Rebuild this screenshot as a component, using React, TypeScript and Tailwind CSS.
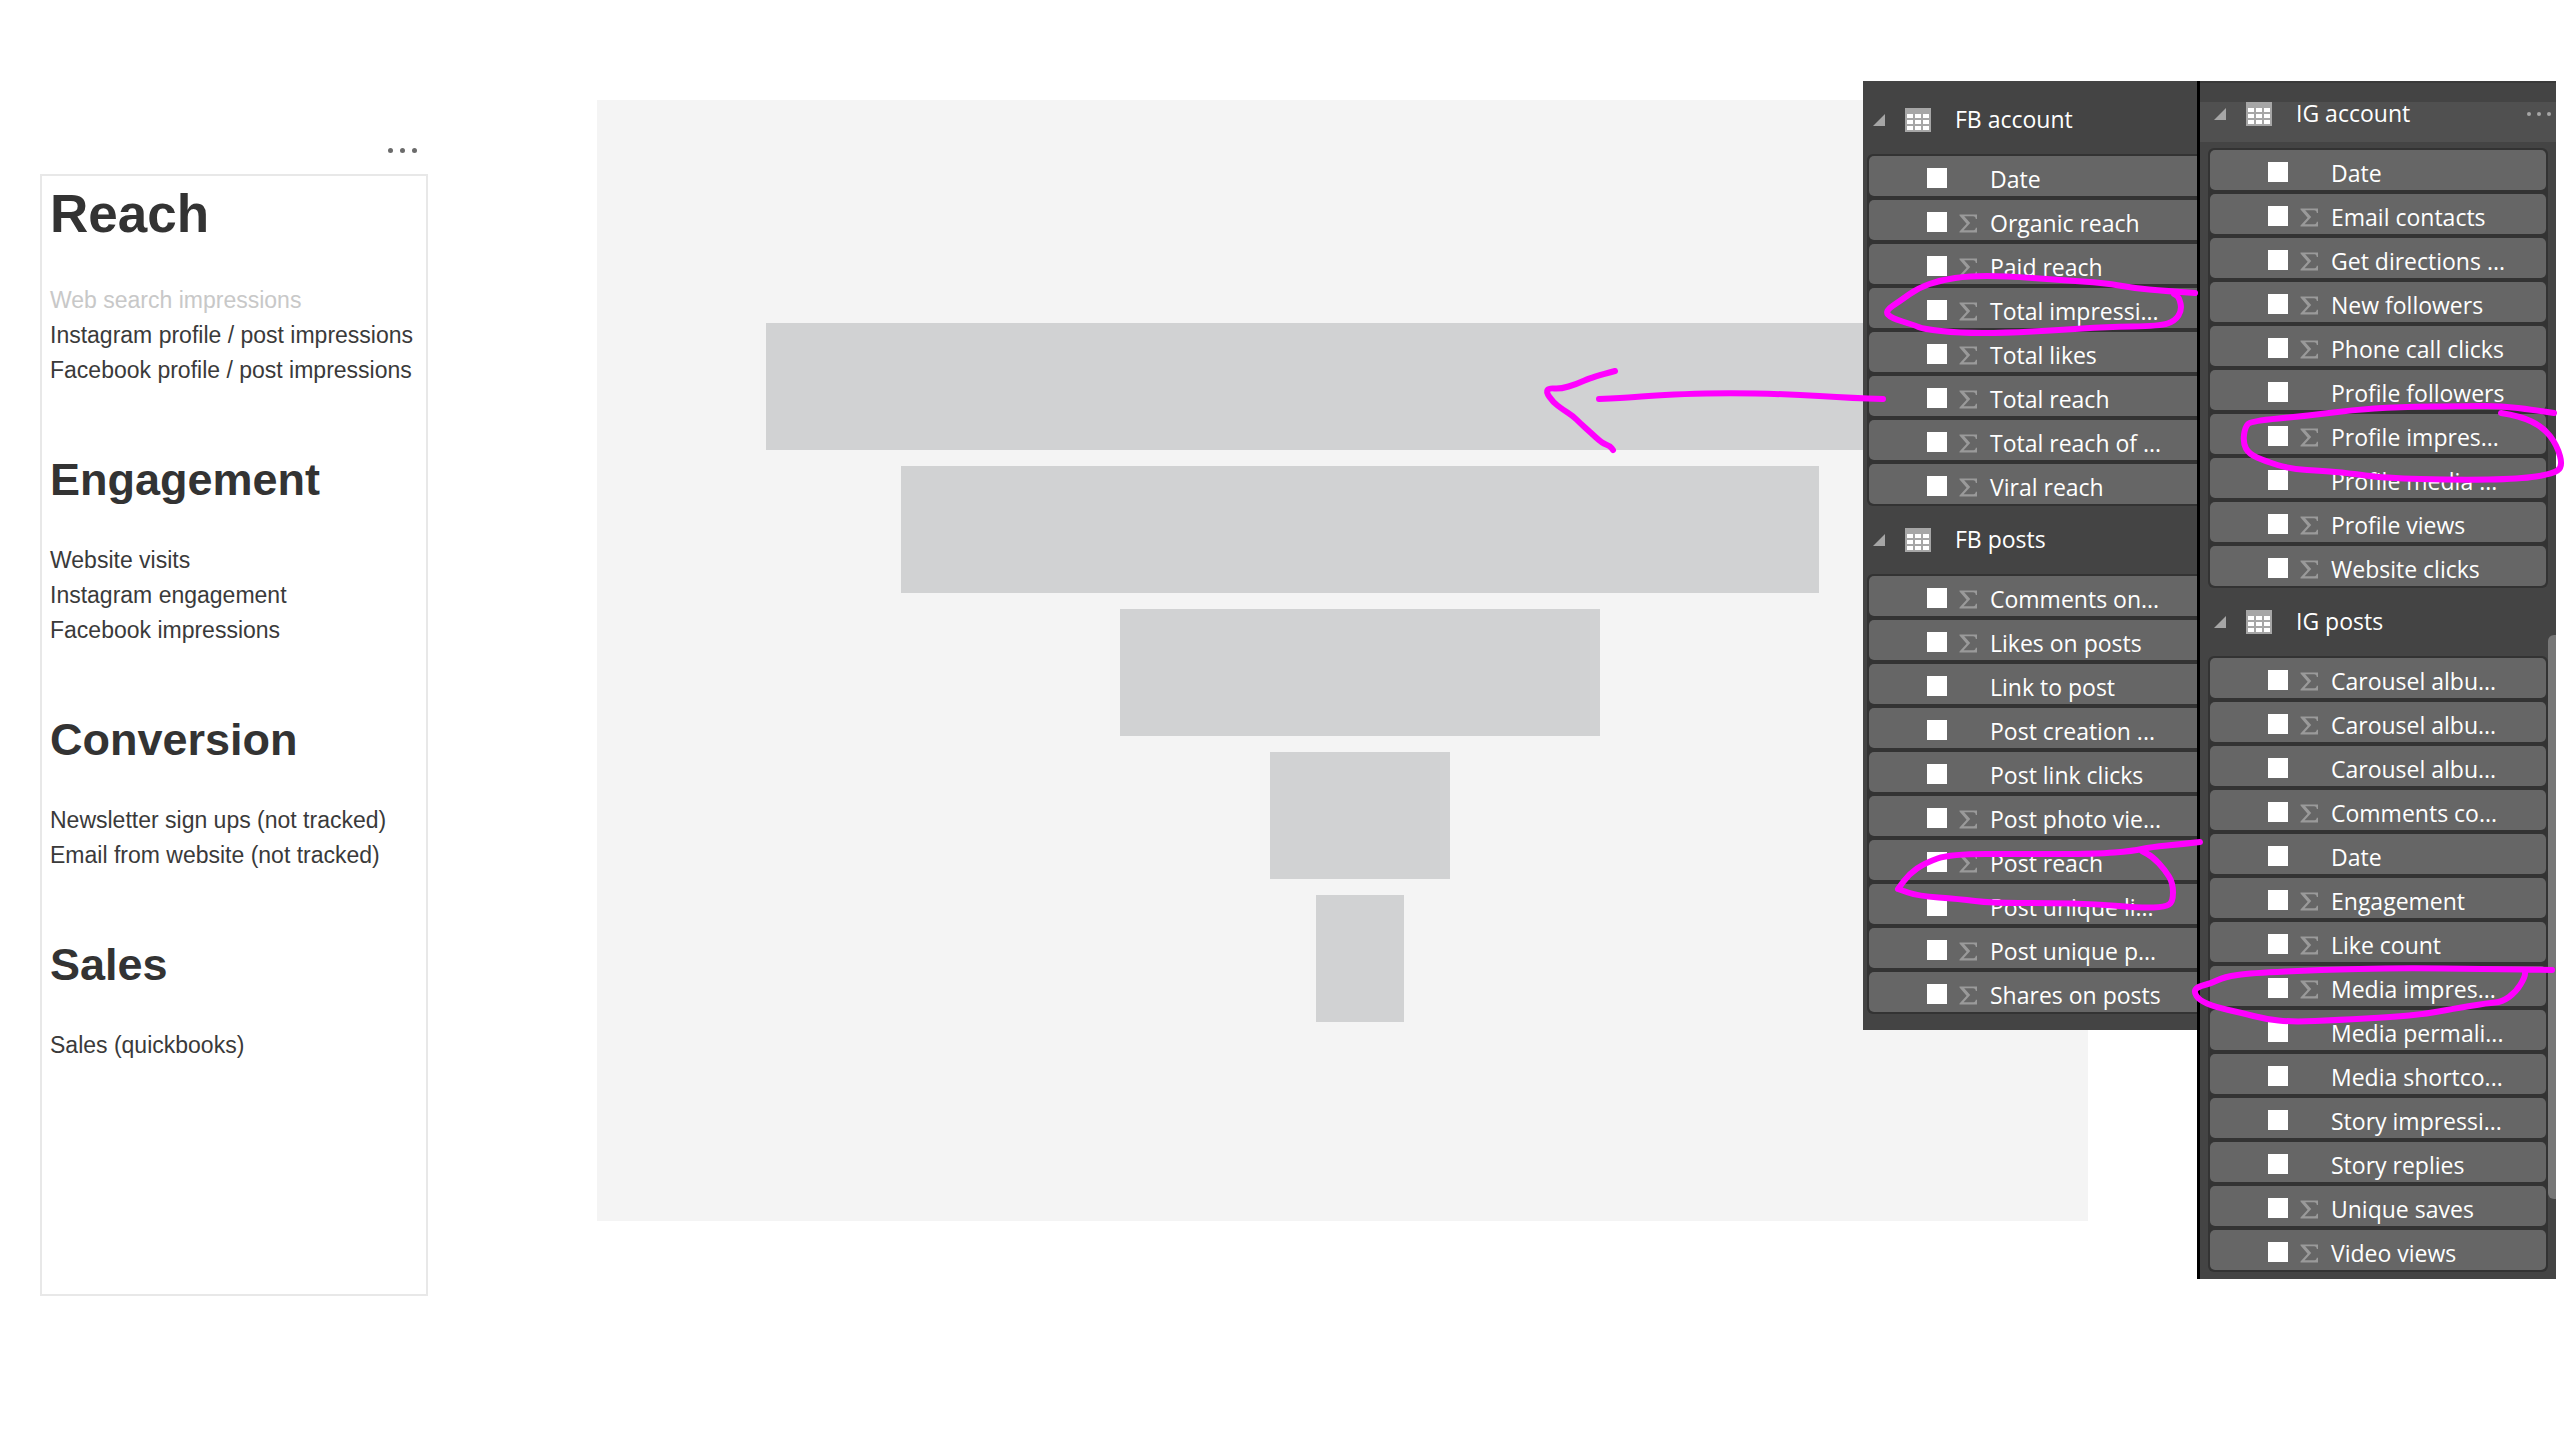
import React from "react";

type Field = { name: string; sum?: boolean };
type Table = { title: string; fields: Field[] };
type Point = [number, number];

const s = (name: string): Field => ({ name, sum: true });
const f = (name: string): Field => ({ name });

const fbTables: Table[] = [
  {
    title: "FB account",
    fields: [f("Date"), s("Organic reach"), s("Paid reach"), s("Total impressi..."), s("Total likes"), s("Total reach"), s("Total reach of ..."), s("Viral reach")],
  },
  {
    title: "FB posts",
    fields: [s("Comments on..."), s("Likes on posts"), f("Link to post"), f("Post creation ..."), f("Post link clicks"), s("Post photo vie..."), s("Post reach"), f("Post unique li..."), s("Post unique p..."), s("Shares on posts")],
  },
];

const igTables: Table[] = [
  {
    title: "IG account",
    fields: [f("Date"), s("Email contacts"), s("Get directions ..."), s("New followers"), s("Phone call clicks"), f("Profile followers"), s("Profile impres..."), f("Profile media ..."), s("Profile views"), s("Website clicks")],
  },
  {
    title: "IG posts",
    fields: [s("Carousel albu..."), s("Carousel albu..."), f("Carousel albu..."), s("Comments co..."), f("Date"), s("Engagement"), s("Like count"), s("Media impres..."), f("Media permali..."), f("Media shortco..."), f("Story impressi..."), f("Story replies"), s("Unique saves"), s("Video views")],
  },
];

const stages = [
  { title: "Engagement", lines: ["Website visits", "Instagram engagement", "Facebook impressions"] },
  { title: "Conversion", lines: ["Newsletter sign ups (not tracked)", "Email from website (not tracked)"] },
  { title: "Sales", lines: ["Sales (quickbooks)"] },
];

const strokes: Point[][] = [
  [[1599, 399], [1623, 398], [1647, 396], [1683, 394], [1730, 393], [1780, 394], [1820, 396], [1853, 398], [1883, 399]],
  [[1615, 371], [1592, 377], [1577, 384], [1560, 389], [1549, 388], [1546, 392], [1553, 402], [1562, 409], [1573, 416], [1580, 423], [1590, 432], [1602, 443], [1610, 446], [1613, 450]],
  [[2195, 293], [2165, 291], [2133, 288], [2105, 283], [2060, 280], [2005, 276], [1969, 276], [1941, 280], [1918, 288], [1900, 301], [1885, 311], [1891, 318], [1914, 325], [1923, 329], [1959, 333], [2005, 333], [2060, 330], [2105, 327], [2160, 326], [2175, 321], [2182, 310], [2179, 297], [2174, 294]],
  [[2501, 413], [2520, 416], [2543, 427], [2557, 445], [2563, 467], [2552, 474], [2520, 479], [2457, 480], [2384, 478], [2347, 473], [2324, 471], [2290, 469], [2265, 461], [2249, 454], [2243, 443], [2245, 427], [2251, 421], [2306, 416], [2352, 410], [2397, 407], [2466, 406], [2502, 406], [2534, 410], [2554, 413]],
  [[2200, 842], [2183, 844], [2151, 847], [2133, 851], [2096, 854], [2023, 854], [1950, 854], [1925, 863], [1909, 874], [1898, 889], [1898, 889], [1918, 896], [1959, 899], [1991, 903], [2046, 903], [2096, 904], [2142, 908], [2165, 907], [2173, 902], [2173, 883], [2165, 870], [2153, 857], [2142, 851]],
  [[2552, 970], [2488, 969], [2397, 968], [2320, 970], [2251, 973], [2224, 977], [2212, 983], [2197, 987], [2194, 992], [2199, 1000], [2215, 1007], [2242, 1013], [2265, 1019], [2292, 1022], [2338, 1020], [2393, 1017], [2425, 1014], [2452, 1009], [2488, 1003], [2502, 1002], [2516, 992], [2525, 977], [2525, 971]],
];

// Runs quadratic curves through the midpoints so that a stroke looks hand-drawn.
function smooth(points: Point[]): string {
  let d = `M${points[0][0]} ${points[0][1]}`;
  for (let i = 1; i < points.length - 1; i++) {
    const [x, y] = points[i];
    const [nx, ny] = points[i + 1];
    d += ` Q${x} ${y} ${(x + nx) / 2} ${(y + ny) / 2}`;
  }
  const last = points[points.length - 1];
  return `${d} L${last[0]} ${last[1]}`;
}

function Sigma() {
  return (
    <svg viewBox="0 0 18 19" className="h-[19px] w-[18px] shrink-0" aria-hidden="true">
      <path
        d="M0.5 0.5H18V5H16.8C16.5 3 16 2.2 14 2.2H5.2L11.2 9L4.6 16.2H14.5C16 16.2 16.5 15.5 16.8 13.8H18V18.5H0.5V17.4L7.6 9.7L0.5 1.6Z"
        fill="#9a9a9a"
      />
    </svg>
  );
}

function TableIcon() {
  return (
    <svg viewBox="0 0 26 24" className="h-6 w-[26px] shrink-0" aria-hidden="true">
      <rect width="26" height="24" fill="#a6a6a6" />
      {[2, 10, 18].map((x) => [6, 12, 18].map((y) => <rect key={`${x}-${y}`} x={x} y={y} width="6" height="4" fill="#fff" />))}
    </svg>
  );
}

function FieldRow({ field, id, flush }: { field: Field; id: string; flush: boolean }) {
  return (
    <li className={`flex h-10 items-center bg-[#666666] pt-1 pl-[58px] ${flush ? "rounded-l-[5px]" : "rounded-[5px]"}`}>
      <input id={id} type="checkbox" className="size-5 shrink-0 appearance-none bg-white checked:bg-sky-300" />
      <span className="ml-3 flex w-[18px] shrink-0 pt-[3px]">{field.sum && <Sigma />}</span>
      <label htmlFor={id} className="ml-[13px] pt-[2px] whitespace-nowrap">{field.name}</label>
    </li>
  );
}

function TableGroup({ table, flush, active }: { table: Table; flush: boolean; active?: boolean }) {
  return (
    <section>
      <div className={`flex h-[68px] items-center ${flush ? "pl-[10px]" : "pl-[14px]"}`}>
        <button type="button" className="flex flex-1 items-center text-left">
          <svg viewBox="0 0 12 12" className="size-3 shrink-0" aria-hidden="true">
            <path d="M12 0V12H0Z" fill="#a6a6a6" />
          </svg>
          <span className="ml-5 flex"><TableIcon /></span>
          <span className="ml-6 pb-[2px] whitespace-nowrap">{table.title}</span>
        </button>
        {active && (
          <button type="button" aria-label="More options" className="mr-[5px] flex gap-[6px]">
            <i className="size-1 rounded-full bg-[#a6a6a6]" />
            <i className="size-1 rounded-full bg-[#a6a6a6]" />
            <i className="size-1 rounded-full bg-[#a6a6a6]" />
          </button>
        )}
      </div>
      <ul className={`flex flex-col gap-1 bg-[#333333] py-[2px] pl-[2px] ${flush ? "ml-1 rounded-l-md" : "mr-2 ml-2 rounded-md pr-[2px]"}`}>
        {table.fields.map((field, i) => (
          <FieldRow key={i} field={field} id={`${table.title}-${i}`.replace(" ", "-")} flush={flush} />
        ))}
      </ul>
    </section>
  );
}

export default function App() {
  return (
    <main className="relative flex min-h-screen items-start overflow-hidden bg-white pr-[9px] pl-10 font-['Liberation_Sans',Arial,sans-serif]">
      <aside className="mt-[148px] w-[388px] shrink-0 text-[23px] leading-[35px] text-[#3a3a3a]">
        <div className="flex justify-end pr-[11px] pb-[21px]">
          <button type="button" aria-label="More options" className="flex gap-[7px]">
            <i className="size-[5px] rounded-full bg-[#6b6b6b]" />
            <i className="size-[5px] rounded-full bg-[#6b6b6b]" />
            <i className="size-[5px] rounded-full bg-[#6b6b6b]" />
          </button>
        </div>
        <div className="min-h-[1122px] border-2 border-[#e8e8e8] px-2 pt-2 whitespace-nowrap">
          <h1 className="text-[53px] leading-[60px] font-bold text-[#333333]">Reach</h1>
          <p className="mt-[39px] text-[#c8c8c8]">Web search impressions</p>
          <p>Instagram profile / post impressions</p>
          <p>Facebook profile / post impressions</p>
          {stages.map((stage) => (
            <section key={stage.title} className="mt-[66px]">
              <h2 className="mb-[37px] text-[45px] leading-[52px] font-bold text-[#333333]">{stage.title}</h2>
              {stage.lines.map((line) => <p key={line}>{line}</p>)}
            </section>
          ))}
        </div>
      </aside>

      <section aria-label="Funnel chart" className="mt-[100px] ml-[169px] min-h-[1121px] flex-1 bg-[#f4f4f4] pt-[223px] pr-[134px] pl-[169px]">
        <div className="flex flex-col items-center gap-4">
          <div className="h-[127px] w-full bg-[#d1d2d3]" />
          <div className="h-[127px] w-[77.2%] bg-[#d1d2d3]" />
          <div className="h-[127px] w-[40.4%] bg-[#d1d2d3]" />
          <div className="h-[127px] w-[15.2%] bg-[#d1d2d3]" />
          <div className="h-[127px] w-[7.4%] bg-[#d1d2d3]" />
        </div>
      </section>

      <div className="relative mt-[81px] -ml-[225px] flex shrink-0 items-start font-['Open_Sans','Noto_Sans',sans-serif] text-[23px] leading-[30px] text-white">
        <div className="w-[334px] bg-[#444444] pt-[5px] pb-4">
          {fbTables.map((table) => <TableGroup key={table.title} table={table} flush />)}
        </div>
        <div className="relative w-[359px] border-l-3 border-black bg-[#444444] bg-linear-[to_bottom,#3a3a3a_2px,#444444_2px,#444444_21px,#505050_21px,#505050_61px,#444444_61px] pb-[7px]">
          <div className="-mt-px">
            {igTables.map((table, i) => <TableGroup key={table.title} table={table} flush={false} active={i === 0} />)}
          </div>
          <div className="absolute top-[554px] right-0 h-[564px] w-2 rounded-l-md bg-[#777777]" />
        </div>
      </div>

      <svg viewBox="1500 0 1065 1436" className="pointer-events-none absolute top-0 right-0 h-[1436px] w-[1065px]" aria-hidden="true">
        {strokes.map((points, i) => (
          <path key={i} d={smooth(points)} fill="none" stroke="#ff00ff" strokeWidth="6" strokeLinecap="round" strokeLinejoin="round" />
        ))}
      </svg>
    </main>
  );
}
